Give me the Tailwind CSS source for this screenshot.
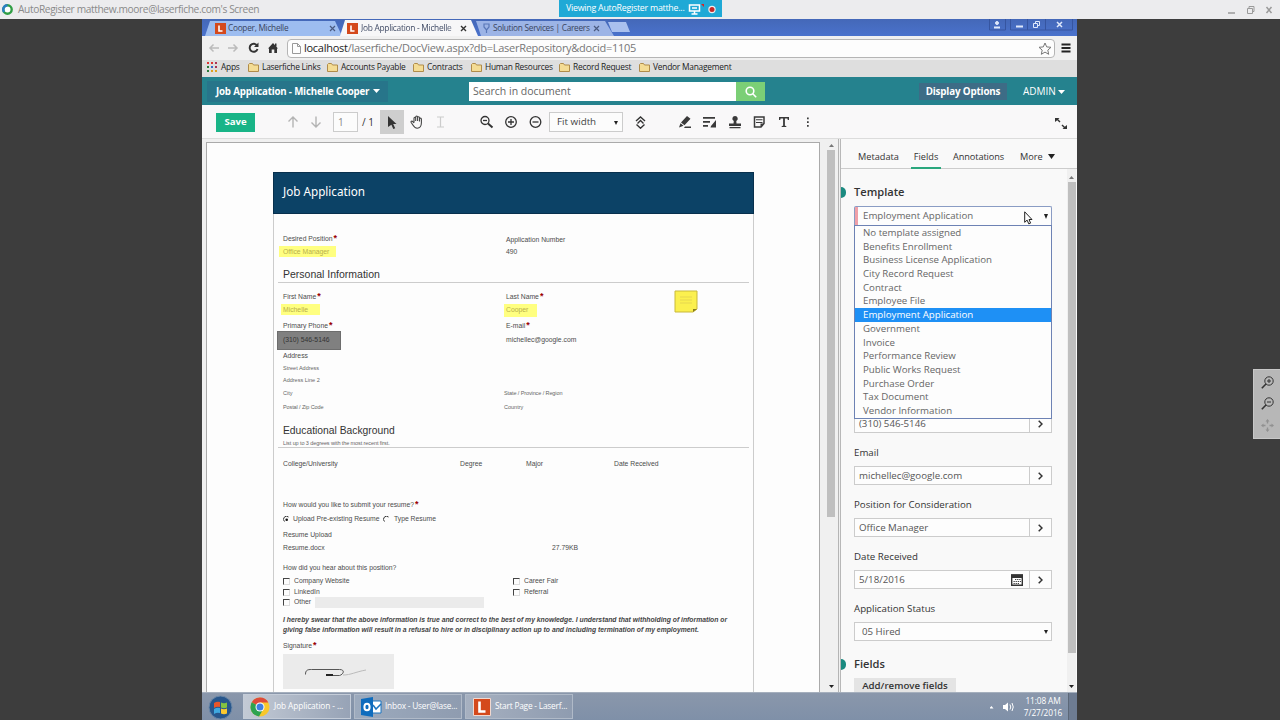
<!DOCTYPE html>
<html lang="en">
  <head>
    <meta charset="UTF-8" />
    <meta name="viewport" content="width=device-width, initial-scale=1.0" />
    <title>Job Application - Michelle Cooper</title>
    <script src="https://cdn.jsdelivr.net/npm/@tailwindcss/browser@4"></script>
  </head>
  <body class="relative w-[1280px] h-[720px] overflow-hidden bg-[#3d3d3d] font-['Open_Sans',sans-serif] text-[#333]">
    <!-- Session title bar -->
    <div class="flex h-[19px] items-center bg-[#ececee] pl-[2px] pr-[5px] whitespace-nowrap">
      <svg class="w-[11px] h-[11px]" viewBox="0 0 11 11">
        <circle cx="5.5" cy="5.5" r="4.2" fill="#fff" stroke="#2f9e44" stroke-width="2.4" />
        <path d="M5.5 1.3a4.2 4.2 0 0 0-3.4 6.7" fill="none" stroke="#2b7fc4" stroke-width="2.4" />
      </svg>
      <span class="ml-[5px] pt-px text-[10.2px] tracking-[-0.38px] text-[#8a8a8a]">AutoRegister matthew.moore@laserfiche.com's Screen</span>
      <svg class="ml-auto w-[48px] h-[12px]" viewBox="0 0 48 12" fill="none" stroke="#9a9a9a">
        <path d="M1 9h7" stroke-width="1.5" />
        <path d="M20.5 4.5h5v5h-5zM22 4V2.5h5v5h-1.5" />
        <path d="M39.5 3l5 6M44.5 3l-5 6" stroke-width="1.5" />
      </svg>
    </div>
    <div class="absolute left-[559px] top-0 z-10 flex w-[163px] h-[17px] items-center bg-[#1fa9d6] pt-px pl-[7px] text-[8.8px] tracking-[-0.23px] text-white whitespace-nowrap">
      <span class="w-[119px]">Viewing AutoRegister matthe...</span>
      <svg class="ml-[3px] w-[30px] h-[13px]" viewBox="0 0 30 13">
        <path d="M1.5 2h10v6h-10zM6.5 8v2.5M3.5 11h6M4 5h5" fill="none" stroke="#fff" stroke-width="1.5" />
        <path d="M13 1h3v3z" fill="#d22" />
        <circle cx="24" cy="6.5" r="3.7" fill="#eee" />
        <circle cx="24" cy="6.5" r="2.5" fill="#c62828" />
      </svg>
    </div>

    <!-- Remote desktop -->
    <div class="ml-[202px] flex w-[875px] h-[701px] flex-col overflow-hidden bg-[#dcdcdc]">
      <!-- Browser tabs -->
      <div class="flex h-[17px] shrink-0 items-end bg-linear-to-b from-[#4468b8] to-[#4a72cc] pl-[3px] text-[8.3px] tracking-[-0.28px] text-[#3a4560] whitespace-nowrap">
        <div class="flex w-[137px] h-[15px] items-center bg-[#9dbdf0] pl-[10px] [clip-path:polygon(5px_0,130px_0,100%_100%,0_100%)]">
          <svg class="w-[11px] h-[11px]" viewBox="0 0 11 11"><path d="M0 0h11v11H0z" fill="#d4491c" /><path d="M4 2.5V8h3.5" fill="none" stroke="#fff" stroke-width="1.6" /></svg>
          <span class="ml-[2px] w-[101px]">Cooper, Michelle</span>
          <svg class="w-[7px] h-[7px]" viewBox="0 0 7 7"><path d="M1 1l5 5M6 1L1 6" stroke="#4a5a80" stroke-width="1.2" /></svg>
        </div>
        <div class="-ml-[2px] flex w-[138px] h-[16px] items-center bg-[#f7f7f8] pl-[7px] [clip-path:polygon(5px_0,131px_0,100%_100%,0_100%)]">
          <svg class="w-[11px] h-[11px] shrink-0" viewBox="0 0 11 11"><path d="M0 0h11v11H0z" fill="#d4491c" /><path d="M4 2.5V8h3.5" fill="none" stroke="#fff" stroke-width="1.6" /></svg>
          <span class="ml-[3px] w-[99px] bg-linear-to-r from-[#3a4560] from-85% to-[#c8ccd6] bg-clip-text text-[8.4px] text-transparent">Job Application - Michelle</span>
          <svg class="w-[7px] h-[7px] shrink-0" viewBox="0 0 7 7"><path d="M1 1l5 5M6 1L1 6" stroke="#333" stroke-width="1.4" /></svg>
        </div>
        <div class="-ml-[2px] flex w-[138px] h-[15px] items-center bg-[#9cb4e6] pl-[7px] [clip-path:polygon(0_0,129px_0,100%_100%,5px_100%)]">
          <svg class="w-[7px] h-[11px]" viewBox="0 0 7 11" fill="none" stroke="#5a78b8"><path d="M1 1h5v3L3.5 7 1 4zM3.5 7v3" stroke-width="1.2" /></svg>
          <span class="ml-[3px] w-[100px]">Solution Services | Careers</span>
          <svg class="w-[7px] h-[7px]" viewBox="0 0 7 7"><path d="M1 1l5 5M6 1L1 6" stroke="#4a5a80" stroke-width="1.2" /></svg>
        </div>
        <div class="-ml-[6px] mb-[4px] w-[22px] h-[10px] bg-[#a9c0ee] [clip-path:polygon(0_0,18px_0,100%_100%,4px_100%)]"></div>
        <svg class="mb-[5px] ml-auto mr-[2px] w-[86px] h-[12px]" viewBox="0 0 86 12" fill="none" stroke="#dfe8fb">
          <path d="M.5 0v11h16V0M21.5 0v11h62V0M38.5 0v11M56.5 0v11" stroke="#3655a0" />
          <circle cx="8" cy="4" r="1.5" fill="#dfe8fb" />
          <path d="M5 8.5h6" stroke-width="2" />
          <path d="M27 7.5h7" stroke-width="2" />
          <path d="M44.5 4.5h4v4h-4zM46.5 4V2.5h4v4H49" />
          <path d="M68 3l5 5M73 3l-5 5" stroke-width="1.5" />
        </svg>
      </div>
      <!-- Address bar -->
      <div class="flex h-[24px] shrink-0 items-center bg-[#f0f0f0] pl-[6px]">
        <svg class="w-[74px] h-[14px]" viewBox="0 0 74 14" fill="none">
          <path d="M1.5 7H11M5.5 3.5L2 7l3.5 3.5M20 7h9.5M25.5 3.5L29 7l-3.5 3.5" stroke="#bbb" stroke-width="1.5" />
          <path d="M49 4.5A4 4 0 1 0 49.5 8" stroke="#333" stroke-width="1.9" />
          <path d="M50.5 1.5V6H46z" fill="#333" />
          <path d="M60 7.5L65 2l5 5.5h-1V12h-2.700V8.5h-2.600V12H61V7.5z" fill="#333" />
          <path d="M67 2.5h1.5v3H67z" fill="#333" />
        </svg>
        <div class="ml-[5px] flex w-[768px] h-[19px] items-center rounded-sm border border-[#b5b5b5] bg-[#fdfdfd] pl-[4px] pr-[2px]">
          <svg class="w-[9px] h-[11px]" viewBox="0 0 9 11" fill="none" stroke="#999"><path d="M.5.5h5l3 3v7h-8zM5.500.5v3h3" /></svg>
          <span class="ml-[3px] pt-px text-[11px] tracking-[-0.27px] text-[#777]"><span class="text-[#222]">localhost</span>/laserfiche/DocView.aspx?db=LaserRepository&amp;docid=1105</span>
          <svg class="ml-auto w-[14px] h-[13px]" viewBox="0 0 14 13" fill="none" stroke="#777"><path d="M7 1l1.700 3.900 4.300.4-3.200 2.800.9 4.200L7 10.100l-3.700 2.200.9-4.200L1 5.300l4.300-.4z" /></svg>
        </div>
        <svg class="ml-[6px] w-[10px] h-[10px]" viewBox="0 0 10 10" stroke="#222" stroke-width="1.8"><path d="M.5 1.5h9M.5 5h9M.5 8.5h9" /></svg>
      </div>
      <!-- Bookmarks -->
      <div class="flex h-[17px] shrink-0 items-center bg-[#dedede] pb-[2px] pl-[5px] text-[8.4px] tracking-[-0.23px] text-[#222] whitespace-nowrap">
        <div class="flex w-[41px] items-center gap-[4px]">
          <svg class="w-[10px] h-[10px]" viewBox="0 0 10 10"><path d="M0 0h2v2H0zM4 0h2v2H4z" fill="#d33" /><path d="M8 0h2v2H8zM8 4h2v2H8z" fill="#a35" /><path d="M0 4h2v2H0zM0 8h2v2H0z" fill="#2a7a3a" /><path d="M4 4h2v2H4z" fill="#36c" /><path d="M4 8h2v2H4zM8 8h2v2H8z" fill="#e0a020" /></svg>
          Apps
        </div>
        <div class="flex w-[79px] items-center gap-[3px]">
          <svg class="w-[11px] h-[9px]" viewBox="0 0 11 9"><path d="M.5 8.5v-7l1-1h3l1 1.500h5V8.500z" fill="#f4dc94" stroke="#b08c4a" /></svg>
          Laserfiche Links
        </div>
        <div class="flex w-[86px] items-center gap-[3px]">
          <svg class="w-[11px] h-[9px]" viewBox="0 0 11 9"><path d="M.5 8.5v-7l1-1h3l1 1.500h5V8.500z" fill="#f4dc94" stroke="#b08c4a" /></svg>
          Accounts Payable
        </div>
        <div class="flex w-[58px] items-center gap-[3px]">
          <svg class="w-[11px] h-[9px]" viewBox="0 0 11 9"><path d="M.5 8.5v-7l1-1h3l1 1.500h5V8.500z" fill="#f4dc94" stroke="#b08c4a" /></svg>
          Contracts
        </div>
        <div class="flex w-[88px] items-center gap-[3px]">
          <svg class="w-[11px] h-[9px]" viewBox="0 0 11 9"><path d="M.5 8.5v-7l1-1h3l1 1.500h5V8.500z" fill="#f4dc94" stroke="#b08c4a" /></svg>
          Human Resources
        </div>
        <div class="flex w-[80px] items-center gap-[3px]">
          <svg class="w-[11px] h-[9px]" viewBox="0 0 11 9"><path d="M.5 8.5v-7l1-1h3l1 1.500h5V8.500z" fill="#f4dc94" stroke="#b08c4a" /></svg>
          Record Request
        </div>
        <div class="flex items-center gap-[3px]">
          <svg class="w-[11px] h-[9px]" viewBox="0 0 11 9"><path d="M.5 8.5v-7l1-1h3l1 1.500h5V8.500z" fill="#f4dc94" stroke="#b08c4a" /></svg>
          Vendor Management
        </div>
      </div>

      <!-- App header -->
      <div class="flex h-[28px] shrink-0 items-center bg-[#25828e] pl-[5px] pr-[12px] text-[10.5px] text-white whitespace-nowrap">
        <div class="flex w-[181px] h-[21px] items-center bg-[#27758a] pl-[9px] text-[9.7px] font-bold tracking-[-0.17px]">
          <span class="w-[157px] pt-[2px]">Job Application - Michelle Cooper</span>
          <svg class="w-[7px] h-[4px]" viewBox="0 0 7 4" fill="#fff"><path d="M0 0h7L3.5 4z" /></svg>
        </div>
        <div class="ml-[81px] mt-px flex h-[19px]">
          <div class="flex w-[267px] items-center bg-white pt-px pl-[4px] text-[#666]">Search in document</div>
          <div class="flex w-[29px] items-center justify-center bg-[#7bcf76]">
            <svg class="w-[12px] h-[12px]" viewBox="0 0 12 12" fill="none" stroke="#fff" stroke-width="1.6"><circle cx="5" cy="5" r="3.8" /><path d="M7.8 7.8l3.400 3.400" /></svg>
          </div>
        </div>
        <div class="ml-auto flex w-[88px] h-[17px] items-center justify-center bg-[#3d6c86] pt-[2px] text-[9.8px] font-bold tracking-[-0.15px]">Display Options</div>
        <span class="ml-[16px] w-[35px] pt-px text-[10px]">ADMIN</span>
        <svg class="mt-px w-[7px] h-[4px]" viewBox="0 0 7 4" fill="#fff"><path d="M0 0h7L3.5 4z" /></svg>
      </div>

      <!-- Document toolbar -->
      <div class="flex h-[34px] shrink-0 items-center border-b border-[#dcdcdc] bg-[#f9f8f9] pt-px pl-[14px] pr-[9px] text-[10px]">
        <div class="flex w-[39px] h-[19px] items-center justify-center bg-[#19b487] text-[9.6px] font-bold text-white">Save</div>
        <svg class="ml-[32px] w-[35px] h-[14px]" viewBox="0 0 35 14" fill="none" stroke="#b4b4b4" stroke-width="1.4"><path d="M6 12.5V2M1.5 6.5L6 2l4.5 4.5M29 1.5V12M24.500 7.5L29 12l4.5-4.5" /></svg>
        <div class="ml-[11px] flex w-[25px] h-[20px] items-center border border-[#ccc] bg-[#fcfcfc] pl-[4px] text-[#888]">1</div>
        <span class="ml-[4px] w-[18px]">/ 1</span>
        <div class="flex w-[24px] h-[24px] items-center justify-center bg-[#cecece]">
          <svg class="w-[9px] h-[13px]" viewBox="0 0 9 13" fill="#333"><path d="M0 0l8.500 8H5.200l2 4.200-1.900.8-1.900-4.200L0 11z" /></svg>
        </div>
        <svg class="ml-[6px] w-[14px] h-[14px]" viewBox="0 0 14 14" fill="none" stroke="#444" stroke-width="1.1"><path d="M4 7.500V3.200c0-1.300 1.700-1.300 1.700 0M5.700 6V2c0-1.300 1.900-1.300 1.900 0v4M7.600 2.600c0-1.200 1.900-1.200 1.900.2V6.500M9.500 4c0-1.200 1.900-1.100 1.900.2v3.600c0 3-1.500 5.400-4.200 5.400-2.500 0-3.500-1.700-4.500-3.400L1.200 7.500c-.7-1.200.8-1.900 1.600-.9L4 8" /></svg>
        <svg class="ml-[12px] w-[9px] h-[12px]" viewBox="0 0 9 12" fill="none" stroke="#ccc" stroke-width="1.2"><path d="M1 1h7M1 11h7M4.500 1v10" /></svg>
        <svg class="ml-[35px] w-[63px] h-[14px]" viewBox="0 0 63 14" fill="none" stroke="#333" stroke-width="1.3">
          <circle cx="5" cy="5.5" r="4" /><path d="M3 5.500h4" /><path d="M8 8.500l4.500 4" stroke-width="1.9" />
          <circle cx="31" cy="7" r="5.3" /><path d="M28 7h6M31 4v6" />
          <circle cx="55.5" cy="7" r="5.3" /><path d="M52.500 7h6" />
        </svg>
        <div class="ml-[6px] flex w-[74px] h-[20px] items-center border border-[#ccc] bg-[#fcfcfc] pt-px pl-[7px] pr-[4px] text-[9.8px] text-[#444]">
          Fit width
          <svg class="ml-auto w-[4px] h-[4px]" viewBox="0 0 4 4" fill="#222"><path d="M0 0h4L2 4z" /></svg>
        </div>
        <svg class="ml-[12px] w-[11px] h-[13px]" viewBox="0 0 11 13" fill="none" stroke="#333" stroke-width="1.4"><path d="M1 5l4.500-4L10 5M2.500 7.500l3-3 3 3M1.500 8.500l4 3.700 4-3.700" /></svg>
        <!-- Annotation tools -->
        <svg class="ml-[32px] w-[136px] h-[14px]" viewBox="0 0 136 14" fill="#3a3a3a">
          <path d="M3 7.500L9 1l3.500 2.800-6 6.500zM2.500 8.300l3 2.500L1 12.500zM7 11.500h6V13H6z" />
          <path d="M25 2h12v1.800H25zM25 6h7v1.800h-7zM25 10h5v1.800h-5zM33 11l5-6v7.500h-5.500z" />
          <path d="M57 1a2.700 2.700 0 0 1 1.300 5.100l.2 2.400H63V11H51V8.500h4.500l.3-2.400A2.700 2.700 0 0 1 57 1zM51.500 12h11v1.300h-11z" />
          <path d="M76.500 2H86v6.500L83 12h-6.500z" fill="none" stroke="#3a3a3a" stroke-width="1.5" />
          <path d="M78 4.300h6.500v1H78zM78 7h6.500v1H78zM82.500 12V8.500H86z" />
          <path d="M101 2h10v3h-1.200l-.4-1.400h-2.500v7.200l1.400.3v1h-4.600v-1l1.400-.3V3.600h-2.500L102.200 5H101z" />
          <path d="M129 2.500h1.700v1.800H129zM129 6.200h1.700V8H129zM129 10h1.700v1.800H129z" />
        </svg>
        <svg class="ml-auto mt-[3px] w-[14px] h-[13px]" viewBox="0 0 14 13" fill="#333"><path d="M1 1h4.500L4.200 2.300l2.300 2.200-1 1-2.300-2.200L1 5zM13 12H8.500l1.300-1.300-2.300-2.200 1-1 2.300 2.200L13 8z" /></svg>
      </div>

      <div class="flex h-[553px] shrink-0 bg-[#f0f0f0]">
        <!-- Document viewer -->
        <div class="flex w-[637px] border-r border-[#b4b4b4] pl-[4px]">
          <div class="mt-[3px] flex w-[614px] overflow-hidden border-t border-x border-[#aaa] bg-[#fdfdfd]">
            <div class="mt-[29px] ml-[66px] flex w-[481px] h-[521px] flex-col border-x border-[#ccc] font-['Liberation_Sans',sans-serif] text-[6.8px] text-[#4c4c4c] whitespace-nowrap">
              <div class="-mx-px flex h-[42px] shrink-0 items-center border border-[#08304d] bg-[#0c4266] pl-[9px] pb-[2px] font-['Noto_Sans',sans-serif] text-[11.7px] text-white">Job Application</div>
              <div class="flex flex-col px-[9px] *:pt-px">
                <div class="mt-[19px] flex h-[12px] items-center">
                  <span class="w-[223px]">Desired Position<b class="ml-px text-[9px] leading-none text-[#900]">*</b></span>
                  <span class="pt-px">Application Number</span>
                </div>
                <div class="flex h-[14px] items-center">
                  <div class="w-[223px]"><span class="-ml-[4px] bg-[#ffff80] py-[2px] pr-[7px] pl-[4px] text-[#b8b04c]">Office Manager</span></div>
                  <span>490</span>
                </div>
                <div class="-mx-[5px] mt-[7px] flex h-[17px] items-center border-b border-[#ccc] pl-[5px] text-[10.5px] text-[#333]">Personal Information</div>
                <div class="mt-[8px] flex h-[12px] items-center">
                  <span class="w-[223px]">First Name<b class="ml-px text-[9px] leading-none text-[#900]">*</b></span>
                  <span>Last Name<b class="ml-px text-[9px] leading-none text-[#900]">*</b></span>
                </div>
                <div class="relative flex h-[14px] items-center">
                  <div class="w-[223px]"><span class="-ml-[2px] bg-[#ffff80] py-[2px] pr-[12px] pl-[2px] text-[#b8b04c]">Michelle</span></div>
                  <span class="-ml-[2px] bg-[#ffff80] py-px pr-[9px] pl-[2px] text-[#b8b04c]">Cooper</span>
                  <!-- Sticky note -->
                  <svg class="absolute left-[391px] -top-[13px] w-[24px] h-[23px]" viewBox="0 0 24 23"><path d="M1 1h22v18l-4 3H1z" fill="#fbf04f" stroke="#c9b93a" /><path d="M6 7h12M6 10h12M6 13h12" stroke="#e6d750" /><path d="M23 19h-4v3z" fill="#8a7d1e" /></svg>
                </div>
                <div class="mt-[3px] flex h-[12px] items-center">
                  <span class="w-[223px]">Primary Phone<b class="ml-px text-[9px] leading-none text-[#900]">*</b></span>
                  <span>E-mail<b class="ml-px text-[9px] leading-none text-[#900]">*</b></span>
                </div>
                <div class="flex h-[15px] items-center">
                  <div class="w-[223px]"><div class="-my-[2px] -ml-[6px] flex w-[64px] h-[19px] items-center border border-[#6d6d6d] bg-[#808080] pl-[5px] text-[#333]">(310) 546-5146</div></div>
                  <span>michellec@google.com</span>
                </div>
                <div class="mt-[3px] flex h-[12px] items-center">Address</div>
                <div class="flex h-[11px] items-center text-[5.5px] text-[#666]">Street Address</div>
                <div class="mt-px flex h-[11px] items-center text-[5.5px] text-[#666]">Address Line 2</div>
                <div class="mt-[2px] flex h-[11px] items-center text-[5.5px] text-[#666]"><span class="w-[221px]">City</span><span class="tracking-[-0.1px]">State / Province / Region</span></div>
                <div class="mt-[3px] flex h-[11px] items-center text-[5.5px] text-[#666]"><span class="w-[221px] tracking-[-0.1px]">Postal / Zip Code</span><span>Country</span></div>
                <div class="mt-[9px] flex h-[18px] items-center text-[10.3px] text-[#333]">Educational Background</div>
                <div class="-mx-[5px] flex h-[9px] items-center border-b border-[#ccc] pl-[5px] text-[5.5px] tracking-[-0.09px] text-[#666]">List up to 3 degrees with the most recent first.</div>
                <div class="mt-[10px] flex h-[12px] items-center">
                  <span class="w-[177px]">College/University</span>
                  <span class="w-[66px]">Degree</span>
                  <span class="w-[88px]">Major</span>
                  <span>Date Received</span>
                </div>
                <div class="mt-[29px] flex h-[12px] items-center"><span>How would you like to submit your resume?<b class="ml-px text-[9px] leading-none text-[#900]">*</b></span></div>
                <div class="mt-[2px] flex h-[12px] items-center">
                  <svg class="mr-[3px] w-[7px] h-[7px]" viewBox="0 0 7 7"><path d="M5.500 1A3 3 0 1 0 1.500 5.500" fill="none" stroke="#333" /><circle cx="3.7" cy="3.7" r="1.3" fill="#111" /></svg>
                  <span class="w-[90px]">Upload Pre-existing Resume</span>
                  <svg class="mr-[4px] w-[7px] h-[7px]" viewBox="0 0 7 7"><path d="M5.500 1A3 3 0 1 0 1.500 5.500" fill="none" stroke="#333" /></svg>
                  <span>Type Resume</span>
                </div>
                <div class="mt-[4px] flex h-[12px] items-center">Resume Upload</div>
                <div class="mt-px flex h-[12px] items-center"><span class="w-[269px]">Resume.docx</span><span>27.79KB</span></div>
                <div class="mt-[8px] flex h-[12px] items-center">How did you hear about this position?</div>
                <div class="mt-px flex h-[11px] items-center">
                  <span class="mr-[4px] w-[7px] h-[7px] border border-[#444] border-r-[#ddd] border-b-[#ddd]"></span><span class="w-[219px]">Company Website</span>
                  <span class="mr-[4px] w-[7px] h-[7px] border border-[#444] border-r-[#ddd] border-b-[#ddd]"></span><span>Career Fair</span>
                </div>
                <div class="flex h-[11px] items-center">
                  <span class="mr-[4px] w-[7px] h-[7px] border border-[#444] border-r-[#ddd] border-b-[#ddd]"></span><span class="w-[219px]">LinkedIn</span>
                  <span class="mr-[4px] w-[7px] h-[7px] border border-[#444] border-r-[#ddd] border-b-[#ddd]"></span><span>Referral</span>
                </div>
                <div class="flex h-[10px] items-center">
                  <span class="mr-[4px] w-[7px] h-[7px] border border-[#444] border-r-[#ddd] border-b-[#ddd]"></span><span class="w-[21px]">Other</span>
                  <span class="w-[169px] h-[11px] bg-[#ebebeb]"></span>
                </div>
                <p class="mt-[7px] text-[6.8px] leading-[9.5px] font-bold text-[#444] italic">I hereby swear that the above information is true and correct to the best of my knowledge. I understand that withholding of information or<br />giving false information will result in a refusal to hire or in disciplinary action up to and including termination of my employment.</p>
                <div class="mt-[6px] flex h-[12px] items-center"><span>Signature<b class="ml-px text-[9px] leading-none text-[#900]">*</b></span></div>
                <div class="mt-[2px] w-[111px] h-[35px] bg-[#ebebeb]">
                  <svg class="w-[111px] h-[34px]" viewBox="0 0 111 34" fill="none" stroke="#555"><path d="M22.500 19.500c0-4.500 2-5 6-5h28c6 0 4 5 0 6H45" /><path d="M43 20h7" stroke="#222" stroke-width="2" /><path d="M60 20c8 0 12-3 23-5" stroke="#bbb" /></svg>
                </div>
              </div>
            </div>
          </div>
          <!-- Viewer scrollbar -->
          <div class="ml-[6px] flex w-[10px] flex-col items-center bg-[#f0f0f0]">
            <svg class="mt-[5px] w-[5px] h-[3px] shrink-0" viewBox="0 0 5 3" fill="#777"><path d="M0 3h5L2.500 0z" /></svg>
            <div class="mt-[3px] w-[8px] h-[367px] bg-[#bfbfbf]"></div>
            <svg class="mt-auto mb-[4px] w-[5px] h-[3px] shrink-0" viewBox="0 0 5 3" fill="#222"><path d="M0 0h5L2.500 3z" /></svg>
          </div>
        </div>

        <!-- Side panel -->
        <div class="ml-px flex w-[237px] flex-col border-l border-[#b8b8b8] bg-[#f9f9f9]">
          <div class="flex h-[30px] shrink-0 items-stretch border-b border-[#ccc] pl-[17px] text-[9.200px] leading-[13px] whitespace-nowrap *:pt-[11px]">
            <span class="w-[53px]">Metadata</span>
            <span class="-mb-px w-[30px] border-b-2 border-[#2aa77d] text-center">Fields</span>
            <span class="ml-[12px] w-[67px] tracking-[-0.1px]">Annotations</span>
            <span class="w-[28px]">More</span>
            <svg class="w-[7px] h-[22px]" viewBox="0 0 7 11" fill="#222"><path d="M0 4h7L3.500 9z" /></svg>
          </div>
          <div class="flex grow overflow-hidden">
            <div class="relative flex w-[226px] flex-col pr-[14px] text-[9.7px] *:shrink-0">
              <div class="mt-[14px] flex h-[18px] items-center text-[11.1px] font-semibold">
                <span class="mr-[8px] w-[5px] h-[11px] rounded-r-full bg-[#1b8a80]"></span>Template
              </div>
              <div class="mt-[5px] ml-[13px] flex w-[198px] h-[19px] items-center rounded-t-[2px] border border-b-0 border-[#8a9cc4] bg-[#fdfdfd] pr-[3px] text-[#666]">
                <span class="mr-[5px] w-[3px] h-full bg-[#f0a0a8]"></span>Employment Application
                <svg class="ml-auto w-[4px] h-[5px]" viewBox="0 0 4 5" fill="#222"><path d="M0 0h4L2 5z" /></svg>
              </div>
              <!-- Open template list -->
              <ul class="absolute top-[56px] left-[13px] z-10 w-[198px] border border-[#6d82b4] bg-[#fdfdfd] text-[9.7px] leading-[13.7px] text-[#666] *:h-[13.7px] *:pl-[8px]">
                <li>No template assigned</li>
                <li>Benefits Enrollment</li>
                <li>Business License Application</li>
                <li>City Record Request</li>
                <li>Contract</li>
                <li>Employee File</li>
                <li class="bg-[#1e90f5] text-white">Employment Application</li>
                <li>Government</li>
                <li>Invoice</li>
                <li>Performance Review</li>
                <li>Public Works Request</li>
                <li>Purchase Order</li>
                <li>Tax Document</li>
                <li>Vendor Information</li>
              </ul>
              <div class="mt-[189px] ml-[13px] flex w-[198px] h-[19px] items-center border border-[#ccc] bg-[#fdfdfd] text-[#555]">
                <span class="grow pt-px pl-[4px]">(310) 546-5146</span>
                <div class="flex w-[22px] h-full items-center justify-center border-l border-[#ccc]"><svg class="w-[5px] h-[8px]" viewBox="0 0 5 8" fill="none" stroke="#333" stroke-width="1.5"><path d="M.7.7L4 4 .7 7.300" /></svg></div>
              </div>
              <label class="ml-[13px] flex h-[33px] items-center pt-[7px]">Email</label>
              <div class="ml-[13px] flex w-[198px] h-[19px] items-center border border-[#ccc] bg-[#fdfdfd] text-[#555]">
                <span class="grow pt-px pl-[4px]">michellec@google.com</span>
                <div class="flex w-[22px] h-full items-center justify-center border-l border-[#ccc]"><svg class="w-[5px] h-[8px]" viewBox="0 0 5 8" fill="none" stroke="#333" stroke-width="1.5"><path d="M.7.7L4 4 .7 7.300" /></svg></div>
              </div>
              <label class="ml-[13px] flex h-[33px] items-center pt-[7px]">Position for Consideration</label>
              <div class="ml-[13px] flex w-[198px] h-[19px] items-center border border-[#ccc] bg-[#fdfdfd] text-[#555]">
                <span class="grow pt-px pl-[4px]">Office Manager</span>
                <div class="flex w-[22px] h-full items-center justify-center border-l border-[#ccc]"><svg class="w-[5px] h-[8px]" viewBox="0 0 5 8" fill="none" stroke="#333" stroke-width="1.5"><path d="M.7.7L4 4 .7 7.300" /></svg></div>
              </div>
              <label class="ml-[13px] flex h-[33px] items-center pt-[7px]">Date Received</label>
              <div class="ml-[13px] flex w-[198px] h-[19px] items-center border border-[#ccc] bg-[#fdfdfd] text-[#555]">
                <span class="grow pt-px pl-[4px]">5/18/2016</span>
                <svg class="mr-[6px] w-[12px] h-[12px]" viewBox="0 0 12 12"><path d="M.7 1h10.600v10.300H.7z" fill="#fff" stroke="#333" stroke-width="1.4" /><path d="M0 .5h12V4H0z" fill="#333" /><path d="M4 5.500h6M2.500 7.500H10M2.500 9.500H8" stroke="#444" stroke-width="1.2" stroke-dasharray="1.3 .8" /></svg>
                <div class="flex w-[22px] h-full items-center justify-center border-l border-[#ccc]"><svg class="w-[5px] h-[8px]" viewBox="0 0 5 8" fill="none" stroke="#333" stroke-width="1.5"><path d="M.7.7L4 4 .7 7.300" /></svg></div>
              </div>
              <label class="ml-[13px] flex h-[33px] items-center pt-[7px]">Application Status</label>
              <div class="ml-[13px] flex w-[198px] h-[19px] items-center border border-[#ccc] bg-[#fdfdfd] pr-[3px] pl-[7px] text-[#555]">
                <span class="pt-px">05 Hired</span>
                <svg class="ml-auto w-[4px] h-[4px]" viewBox="0 0 4 4" fill="#222"><path d="M0 0h4L2 4z" /></svg>
              </div>
              <div class="mt-[14px] flex h-[18px] items-center text-[11.1px] font-semibold">
                <span class="mr-[8px] w-[5px] h-[11px] rounded-r-full bg-[#1b8a80]"></span>Fields
              </div>
              <div class="mt-[5px] ml-[13px] flex w-[102px] h-[17px] items-center justify-center bg-[#e4e4e4] font-semibold">Add/remove fields</div>
            </div>
            <!-- Panel scrollbar -->
            <div class="flex w-[9px] flex-col items-center bg-[#f0f0f0]">
              <svg class="mt-[7px] w-[5px] h-[3px] shrink-0" viewBox="0 0 5 3" fill="#777"><path d="M0 3h5L2.500 0z" /></svg>
              <div class="mt-[3px] w-[8px] h-[471px] bg-[#bfbfbf]"></div>
              <svg class="mt-auto mb-[4px] w-[5px] h-[3px] shrink-0" viewBox="0 0 5 3" fill="#222"><path d="M0 0h5L2.500 3z" /></svg>
            </div>
          </div>
        </div>
      </div>

      <!-- Taskbar -->
      <div class="flex h-[28px] shrink-0 items-center gap-[3px] border-t border-[#a5afbd] bg-linear-to-b from-[#8a97ab] to-[#7f90a8] text-[8.3px] tracking-[-0.2px] text-white whitespace-nowrap">
        <svg class="mr-[6px] ml-[6px] w-[26px] h-[26px]" viewBox="0 0 26 26">
          <circle cx="12.5" cy="13.5" r="11.5" fill="#27568c" stroke="#6b88a8" />
          <path d="M6 9q3-2 6-1v5q-3-1-6 1z" fill="#e8562a" />
          <path d="M13 8.500q3 1.500 6 0v5q-3 1.500-6 0z" fill="#84c341" />
          <path d="M6 15q3-2 6-1v5q-3-1-6 1z" fill="#3fa9e0" />
          <path d="M13 14.500q3 1.500 6 0v5q-3 1.500-6 0z" fill="#fbc82e" />
        </svg>
        <div class="flex w-[108px] h-[25px] items-center border border-[#c4ccd8] bg-linear-to-r from-[#c3cad5] to-[#97a3b6] pl-[6px]">
          <svg class="w-[20px] h-[20px] shrink-0" viewBox="0 0 20 20"><circle cx="10" cy="10" r="9.5" fill="#f8c72c" /><path d="M10 10L1.800 5.200A9.500 9.500 0 0 1 18.300 5.500H10z" fill="#dd4b3a" /><path d="M10 10L1.800 5.200A9.500 9.500 0 0 0 9 19.500l4-7z" fill="#2da351" /><circle cx="10" cy="10" r="4.5" fill="#fff" /><circle cx="10" cy="10" r="3.5" fill="#3f7fe0" /></svg>
          <span class="ml-[4px] tracking-[-0.1px]">Job Application - ...</span>
        </div>
        <div class="flex w-[108px] h-[25px] items-center border border-[#b0bac8] bg-linear-to-r from-[#9caabd] to-[#8f9cb0] pl-[6px]">
          <svg class="w-[21px] h-[20px] shrink-0" viewBox="0 0 21 20"><path d="M11 4h9v12h-9z" fill="#fff" stroke="#1b74c0" /><path d="M12 8l3 4 5-5" fill="none" stroke="#1b74c0" stroke-width="1.5" /><path d="M0 2l12-2v20L0 18z" fill="#0f6cbd" /><ellipse cx="6" cy="10" rx="2.6" ry="3.3" fill="none" stroke="#fff" stroke-width="2" /></svg>
          <span class="ml-[3px]">Inbox - User@lase...</span>
        </div>
        <div class="flex w-[108px] h-[25px] items-center border border-[#b0bac8] bg-linear-to-r from-[#a6b0c0] to-[#8f9cb0] pl-[7px]">
          <svg class="w-[18px] h-[18px] shrink-0" viewBox="0 0 18 18"><path d="M.5.5h17v17H.5z" fill="#d4491c" stroke="#f0d8d0" /><path d="M6.500 3.500v10h6" fill="none" stroke="#fff" stroke-width="2.6" /></svg>
          <span class="ml-[4px]">Start Page - Laserf...</span>
        </div>
        <svg class="ml-auto w-[28px] h-[12px]" viewBox="0 0 28 12" fill="#fff"><path d="M-1 7.500h4.500L1.500 5zM13 4h2l3-2.500v9L15 8h-2z" /><path d="M20 3.500q1.500 2.500 0 5M22 2q2.500 4 0 8" fill="none" stroke="#fff" /></svg>
        <div class="flex w-[44px] flex-col items-center text-[8.3px] leading-[11.5px] tracking-[-0.1px]"><span>11:08 AM</span><span>7/27/2016</span></div>
        <div class="h-full w-[9px] border-l border-[#5c6878] bg-[#6e7c92]"></div>
      </div>
    </div>

    <!-- Mouse pointer -->
    <svg class="absolute left-[1024px] top-[211px] z-20 w-[9px] h-[14px]" viewBox="0 0 9 14"><path d="M.7.800v10.500l2.400-2.200 1.700 3.800 1.800-.8L5 8.500h3z" fill="#fff" stroke="#222" /></svg>

    <!-- Zoom controls of the viewing session -->
    <div class="absolute left-[1253px] top-[369px] flex w-[27px] h-[70px] flex-col items-center justify-around border border-r-0 border-[#c8c8c8] bg-[#b7b7b7] py-[2px]">
      <svg class="w-[13px] h-[13px]" viewBox="0 0 13 13" fill="none" stroke="#333"><circle cx="8" cy="5" r="4.2" /><path d="M6 5h4M8 3v4" /><path d="M5 8L.8 12.200" stroke-width="1.6" /></svg>
      <svg class="w-[13px] h-[13px]" viewBox="0 0 13 13" fill="none" stroke="#333"><circle cx="8" cy="5" r="4.2" /><path d="M6 5h4" /><path d="M5 8L.8 12.200" stroke-width="1.6" /></svg>
      <svg class="w-[13px] h-[13px]" viewBox="0 0 13 13" fill="#919191"><path d="M6.500 0l2 2.500H7.200v2H5.800v-2H4.500zM6.500 13l2-2.500H7.200v-2H5.800v2H4.500zM0 6.500l2.500-2v1.300h2v1.400h-2v1.300zM13 6.500l-2.500-2v1.300h-2v1.400h2v1.300z" /></svg>
    </div>
  </body>
</html>
